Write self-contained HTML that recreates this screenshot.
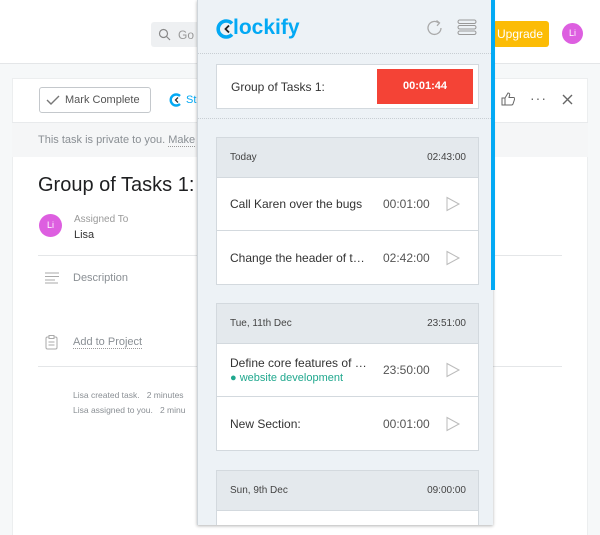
<!DOCTYPE html>
<html><head><style>
*{margin:0;padding:0;box-sizing:border-box}
html,body{width:600px;height:535px;overflow:hidden}
body{background:#f6f8f9;font-family:"Liberation Sans",sans-serif;position:relative}
.abs{position:absolute}
.top{left:0;top:0;width:600px;height:64px;background:#fff;border-bottom:1px solid #e4e6e8}
.card{left:12px;top:78px;width:576px;height:470px;background:#fff;border:1px solid #eceeef}
.pop{left:197px;top:0;width:296px;height:525px;background:#edf2f6;border-left:1px solid #cfd5da;box-shadow:0 1px 3px rgba(0,0,0,.3)}
.grp{position:absolute;left:18px;width:263px;background:#fff;border:1px solid #d3d9de}
.gh{height:40px;background:#e4e9ed;border-bottom:1px solid #d3d9de;font-size:10px;color:#444;display:flex;justify-content:space-between;align-items:center;padding:0 12px 0 13px}
.row{height:53px;border-bottom:1px solid #d3d9de;display:flex;align-items:center;padding:0 0 0 13px;font-size:12px;color:#333;position:relative}
.row:last-child{border-bottom:none}
.row .n{width:140px;white-space:nowrap;overflow:hidden;text-overflow:ellipsis}
.row .t{position:absolute;left:166px;color:#555}
.row svg{position:absolute;left:228px}
</style></head><body>
<div class="abs top"></div>
<div class="abs" style="left:151px;top:22px;width:60px;height:25px;background:#eef0f2;border-radius:3px"></div>
<svg class="abs" style="left:158px;top:28px" width="13" height="13"><circle cx="5.5" cy="5.5" r="4" fill="none" stroke="#888" stroke-width="1.2"/><line x1="8.5" y1="8.5" x2="12" y2="12" stroke="#888" stroke-width="1.2"/></svg>
<div class="abs" style="left:178px;top:28px;font-size:12px;color:#999">Go t</div>
<div class="abs" style="left:493px;top:21px;width:56px;height:26px;background:#fcbc05;border-radius:3px;color:#fff;font-size:12px;line-height:26px;padding-left:4px">Upgrade</div>
<div class="abs" style="left:562px;top:23px;width:21px;height:21px;border-radius:50%;background:#dd5fe0;color:#fff;font-size:9px;text-align:center;line-height:21px">Li</div>
<div class="abs card"></div>
<div class="abs" style="left:12px;top:122px;width:576px;height:35px;background:#f5f6f7;border-top:1px solid #e8eaec"></div>
<div class="abs" style="left:39px;top:87px;width:112px;height:26px;border:1px solid #c4c8cc;border-radius:3px;font-size:11px;color:#555;line-height:24px;padding-left:25px">Mark Complete</div>
<svg class="abs" style="left:46px;top:94px" width="14" height="12"><path d="M1 6l4 4 8-8" fill="none" stroke="#777" stroke-width="1.4"/></svg>
<svg class="abs" style="left:169px;top:93px" width="14" height="14"><path d="M11 3A5.5 5.5 0 1 0 11 11" fill="none" stroke="#03a9f4" stroke-width="2.4"/><path d="M9 4.5L6.5 7 9 9.5" fill="none" stroke="#333" stroke-width="1.3"/></svg>
<div class="abs" style="left:186px;top:94px;font-size:11px;color:#03a9f4">St</div>
<div class="abs" style="left:38px;top:134px;font-size:11px;color:#8a8f94">This task is private to you. <span style="border-bottom:1px dotted #999">Make</span></div>
<div class="abs" style="left:38px;top:174px;font-size:20px;color:#1e1f21">Group of Tasks 1:</div>
<div class="abs" style="left:39px;top:214px;width:23px;height:23px;border-radius:50%;background:#dd5fe0;color:#fff;font-size:9px;text-align:center;line-height:23px">Li</div>
<div class="abs" style="left:74px;top:214px;font-size:10px;color:#999">Assigned To</div>
<div class="abs" style="left:74px;top:229px;font-size:11px;color:#333">Lisa</div>
<div class="abs" style="left:38px;top:255px;width:524px;height:1px;background:#e4e6e8"></div>
<svg class="abs" style="left:44px;top:272px" width="16" height="12"><path d="M1 1h14M1 4.5h14M1 8h10M1 11h13" stroke="#aaa" stroke-width="1"/></svg>
<div class="abs" style="left:73px;top:272px;font-size:11px;color:#8a8f94">Description</div>
<svg class="abs" style="left:45px;top:335px" width="13" height="15"><rect x="1" y="2" width="11" height="12" rx="1.5" fill="none" stroke="#aaa"/><rect x="4" y="0.5" width="5" height="3" fill="#fff" stroke="#aaa"/><path d="M3.5 7h6M3.5 10h6" stroke="#aaa"/></svg>
<div class="abs" style="left:73px;top:336px;font-size:11px;color:#8a8f94;border-bottom:1px dotted #999">Add to Project</div>
<div class="abs" style="left:38px;top:366px;width:524px;height:1px;background:#e4e6e8"></div>
<div class="abs" style="left:73px;top:388px;font-size:8.5px;color:#8a8f94;line-height:15px">Lisa created task. &nbsp; 2 minutes<br>Lisa assigned to you. &nbsp; 2 minu</div>
<svg class="abs" style="left:501px;top:92px" width="14" height="14"><path d="M1 6h3v7H1zM4 6l3-5c1.5 0 2 1 1.5 2.5L8 5.5h4.5c1 0 1.5 1 1 2l-1.5 4.5c-.3.7-.8 1-1.5 1H4" fill="none" stroke="#666" stroke-width="1"/></svg>
<div class="abs" style="left:530px;top:90px;font-size:14px;color:#666;letter-spacing:1px">···</div>
<svg class="abs" style="left:562px;top:94px" width="11" height="11"><path d="M1 1l9 9M10 1l-9 9" stroke="#666" stroke-width="1.4"/></svg>

<div class="abs pop">
 <svg class="abs" style="left:18px;top:19px" width="20" height="20"><path d="M16 4.5A8 8 0 1 0 16 15.5" fill="none" stroke="#03a9f4" stroke-width="3.6"/><path d="M13 6.5L9.5 10 13 13.5" fill="none" stroke="#222" stroke-width="1.8"/></svg>
 <div class="abs" style="left:35px;top:16px;font-size:21px;color:#03a9f4;font-weight:bold">lockify</div>
 <svg class="abs" style="left:228px;top:19px" width="18" height="18"><path d="M15 9A6.5 6.5 0 1 1 12.5 3.8" fill="none" stroke="#aaa" stroke-width="1.3"/><path d="M10.5 1.5l3 2.5-2.5 2.8" fill="none" stroke="#aaa" stroke-width="1.3"/></svg>
 <svg class="abs" style="left:259px;top:19px" width="20" height="17"><rect x="1" y="1" width="18" height="3.5" rx="1.7" fill="none" stroke="#999"/><rect x="1" y="6.5" width="18" height="3.5" rx="1.7" fill="none" stroke="#999"/><rect x="1" y="12" width="18" height="3.5" rx="1.7" fill="none" stroke="#999"/></svg>
 <div class="abs" style="left:0;top:53px;width:295px;border-top:1px dotted #c8ced3"></div>
 <div class="abs" style="left:18px;top:64px;width:263px;height:45px;background:#fff;border:1px solid #d3d9de"></div>
 <div class="abs" style="left:33px;top:80px;font-size:12px;color:#333">Group of Tasks 1:</div>
 <div class="abs" style="left:179px;top:69px;width:96px;height:35px;background:#f44336;color:#fff;font-size:11px;font-weight:bold;text-align:center;line-height:35px">00:01:44</div>
 <div class="abs" style="left:0;top:118px;width:295px;border-top:1px dotted #c8ced3"></div>
 <div class="grp" style="top:137px">
  <div class="gh"><span>Today</span><span>02:43:00</span></div>
  <div class="row"><span class="n">Call Karen over the bugs</span><span class="t">00:01:00</span><svg width="16" height="16"><path d="M2 1.5L14 8 2 14.5z" fill="none" stroke="#bbb"/></svg></div>
  <div class="row"><span class="n">Change the header of t…</span><span class="t">02:42:00</span><svg width="16" height="16"><path d="M2 1.5L14 8 2 14.5z" fill="none" stroke="#bbb"/></svg></div>
 </div>
 <div class="grp" style="top:303px">
  <div class="gh"><span>Tue, 11th Dec</span><span>23:51:00</span></div>
  <div class="row"><span class="n" style="line-height:14px">Define core features of t…<br><span style="color:#20a88e;font-size:11px">● website development</span></span><span class="t">23:50:00</span><svg width="16" height="16"><path d="M2 1.5L14 8 2 14.5z" fill="none" stroke="#bbb"/></svg></div>
  <div class="row"><span class="n">New Section:</span><span class="t">00:01:00</span><svg width="16" height="16"><path d="M2 1.5L14 8 2 14.5z" fill="none" stroke="#bbb"/></svg></div>
 </div>
 <div class="grp" style="top:470px;height:55px;border-bottom:none">
  <div class="gh"><span>Sun, 9th Dec</span><span>09:00:00</span></div>
 </div>
 <div class="abs" style="left:293px;top:0;width:4px;height:290px;background:#03a9f4"></div>
</div>
</body></html>
